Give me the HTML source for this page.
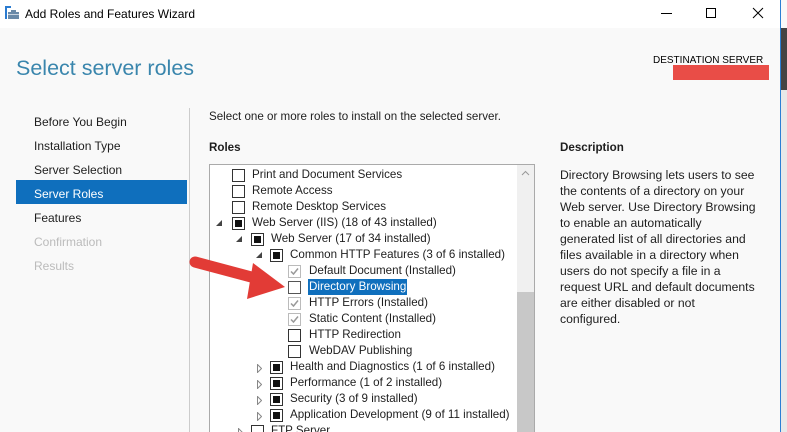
<!DOCTYPE html>
<html style="width:787px;height:432px;overflow:hidden"><head><meta charset="utf-8">
<style>
*{margin:0;padding:0;box-sizing:border-box}
body{width:787px;height:432px;overflow:hidden;background:#f9f9f9;font-family:"Liberation Sans",sans-serif;font-size:11.6px;color:#1e1e1e;position:relative}
.a{position:absolute;white-space:nowrap}
.cb{position:absolute;width:13px;height:13px;border:1px solid #333;background:#fff}
.cb.f::after{content:"";position:absolute;left:2px;top:2px;width:7px;height:7px;background:#111}
.cb.c{border-color:#bbb}
.nav{position:absolute;left:34px;font-size:12px}
.r{position:absolute;height:16px;line-height:16px;white-space:nowrap}
</style></head><body>
<div class="a" style="left:0;top:0;width:780px;height:28px;background:#fff"></div>
<svg class="a" style="left:4px;top:5px" width="16" height="16" viewBox="0 0 16 16"><rect x="1" y="1" width="6" height="2" fill="#2a7bd0"/><rect x="1" y="1" width="2" height="13" fill="#2a7bd0"/><rect x="4" y="7" width="11" height="7" fill="#6a8aa8"/><rect x="7" y="5" width="5" height="2" fill="#6a8aa8"/><rect x="4" y="9" width="11" height="1" fill="#c8d4e0"/></svg>
<div class="a" style="left:25px;top:7px;font-size:12px;color:#000">Add Roles and Features Wizard</div>
<div class="a" style="left:661px;top:13px;width:11px;height:1px;background:#000"></div>
<div class="a" style="left:706px;top:8px;width:10px;height:10px;border:1px solid #000"></div>
<svg class="a" style="left:752px;top:7px" width="12" height="12"><path d="M1 1L11 11M11 1L1 11" stroke="#000" stroke-width="1"/></svg>
<div class="a" style="left:780px;top:0;width:1px;height:432px;background:#2b7fd4"></div>
<div class="a" style="left:781px;top:28px;width:6px;height:62px;background:#444"></div>
<div class="a" style="left:781px;top:90px;width:6px;height:342px;background:#e8e8e8"></div>
<div class="a" style="left:16px;top:56px;font-size:21.5px;color:#3a86ad">Select server roles</div>
<div class="a" style="left:653px;top:55px;font-size:10px;color:#000">DESTINATION SERVER</div>
<div class="a" style="left:673px;top:65px;width:96px;height:15px;background:#e94d47"></div>
<div class="a" style="left:189px;top:108px;width:1px;height:324px;background:#ccc"></div>
<div class="nav" style="top:115px">Before You Begin</div>
<div class="nav" style="top:139px">Installation Type</div>
<div class="nav" style="top:163px">Server Selection</div>
<div class="a" style="left:16px;top:180px;width:171px;height:24px;background:#0f6fbd"></div>
<div class="nav" style="top:187px;color:#fff">Server Roles</div>
<div class="nav" style="top:211px">Features</div>
<div class="nav" style="top:235px;color:#bbb">Confirmation</div>
<div class="nav" style="top:259px;color:#bbb">Results</div>
<div class="a" style="left:209px;top:110px">Select one or more roles to install on the selected server.</div>
<div class="a" style="left:209px;top:141px;font-weight:bold">Roles</div>
<div class="a" style="left:560px;top:141px;font-weight:bold">Description</div>
<div class="a" style="left:560px;top:167px;line-height:16px;font-size:12.2px">Directory Browsing lets users to see<br>the contents of a directory on your<br>Web server. Use Directory Browsing<br>to enable an automatically<br>generated list of all directories and<br>files available in a directory when<br>users do not specify a file in a<br>request URL and default documents<br>are either disabled or not<br>configured.</div>
<div class="a" style="left:209px;top:164px;width:326px;height:280px;background:#fff;border:1px solid #aaa;overflow:hidden">
<div class="a" style="left:307px;top:0;width:17px;height:280px;background:#f0f0f0"></div>
<div class="a" style="left:307px;top:127px;width:17px;height:160px;background:#c8c8c8"></div>
<svg class="a" style="left:311px;top:5px" width="9" height="6"><path d="M1 5L4.5 1.5L8 5" stroke="#999" fill="none"/></svg>
</div>
<svg class="a" style="left:185px;top:250px" width="110" height="55"><path d="M10 12L70 28" stroke="#e23b36" stroke-width="11" stroke-linecap="round"/><path d="M68 13L100 37L62 49Z" fill="#e23b36"/></svg>
<div style="position:absolute;left:210px;top:167px;width:307px;height:265px;overflow:hidden">
<div class="cb" style="left:22px;top:2px"></div><div class="r" style="left:42px;top:0px">Print and Document Services</div>
<div class="cb" style="left:22px;top:18px"></div><div class="r" style="left:42px;top:16px">Remote Access</div>
<div class="cb" style="left:22px;top:34px"></div><div class="r" style="left:42px;top:32px">Remote Desktop Services</div>
<svg class="a" style="left:6px;top:53px" width="6" height="6"><path d="M6 0L6 6L0 6Z" fill="#444"/></svg><div class="cb f" style="left:22px;top:50px"></div><div class="r" style="left:42px;top:48px">Web Server (IIS) (18 of 43 installed)</div>
<svg class="a" style="left:26px;top:69px" width="6" height="6"><path d="M6 0L6 6L0 6Z" fill="#444"/></svg><div class="cb f" style="left:41px;top:66px"></div><div class="r" style="left:61px;top:64px">Web Server (17 of 34 installed)</div>
<svg class="a" style="left:46px;top:85px" width="6" height="6"><path d="M6 0L6 6L0 6Z" fill="#444"/></svg><div class="cb f" style="left:60px;top:82px"></div><div class="r" style="left:80px;top:80px">Common HTTP Features (3 of 6 installed)</div>
<div class="cb c" style="left:78px;top:98px"><svg width="11" height="11" style="position:absolute;left:0;top:0"><path d="M2 5.5L4.5 8L9 2.5" stroke="#999" stroke-width="1.5" fill="none"/></svg></div><div class="r" style="left:99px;top:96px">Default Document (Installed)</div>
<div class="cb" style="left:78px;top:114px;border-color:#555"></div><div class="r" style="left:98px;top:112px;background:#0f6fbd;color:#fff;padding:0 1px">Directory Browsing</div>
<div class="cb c" style="left:78px;top:130px"><svg width="11" height="11" style="position:absolute;left:0;top:0"><path d="M2 5.5L4.5 8L9 2.5" stroke="#999" stroke-width="1.5" fill="none"/></svg></div><div class="r" style="left:99px;top:128px">HTTP Errors (Installed)</div>
<div class="cb c" style="left:78px;top:146px"><svg width="11" height="11" style="position:absolute;left:0;top:0"><path d="M2 5.5L4.5 8L9 2.5" stroke="#999" stroke-width="1.5" fill="none"/></svg></div><div class="r" style="left:99px;top:144px">Static Content (Installed)</div>
<div class="cb" style="left:78px;top:162px"></div><div class="r" style="left:99px;top:160px">HTTP Redirection</div>
<div class="cb" style="left:78px;top:178px"></div><div class="r" style="left:99px;top:176px">WebDAV Publishing</div>
<svg class="a" style="left:47px;top:197px" width="5" height="9"><path d="M0.5 0.5L4.5 4.5L0.5 8.5Z" stroke="#888" fill="none"/></svg><div class="cb f" style="left:60px;top:194px"></div><div class="r" style="left:80px;top:192px">Health and Diagnostics (1 of 6 installed)</div>
<svg class="a" style="left:47px;top:213px" width="5" height="9"><path d="M0.5 0.5L4.5 4.5L0.5 8.5Z" stroke="#888" fill="none"/></svg><div class="cb f" style="left:60px;top:210px"></div><div class="r" style="left:80px;top:208px">Performance (1 of 2 installed)</div>
<svg class="a" style="left:47px;top:229px" width="5" height="9"><path d="M0.5 0.5L4.5 4.5L0.5 8.5Z" stroke="#888" fill="none"/></svg><div class="cb f" style="left:60px;top:226px"></div><div class="r" style="left:80px;top:224px">Security (3 of 9 installed)</div>
<svg class="a" style="left:47px;top:245px" width="5" height="9"><path d="M0.5 0.5L4.5 4.5L0.5 8.5Z" stroke="#888" fill="none"/></svg><div class="cb f" style="left:60px;top:242px"></div><div class="r" style="left:80px;top:240px">Application Development (9 of 11 installed)</div>
<svg class="a" style="left:28px;top:261px" width="5" height="9"><path d="M0.5 0.5L4.5 4.5L0.5 8.5Z" stroke="#888" fill="none"/></svg><div class="cb" style="left:41px;top:258px"></div><div class="r" style="left:61px;top:256px">FTP Server</div>
</div>
</body></html>
